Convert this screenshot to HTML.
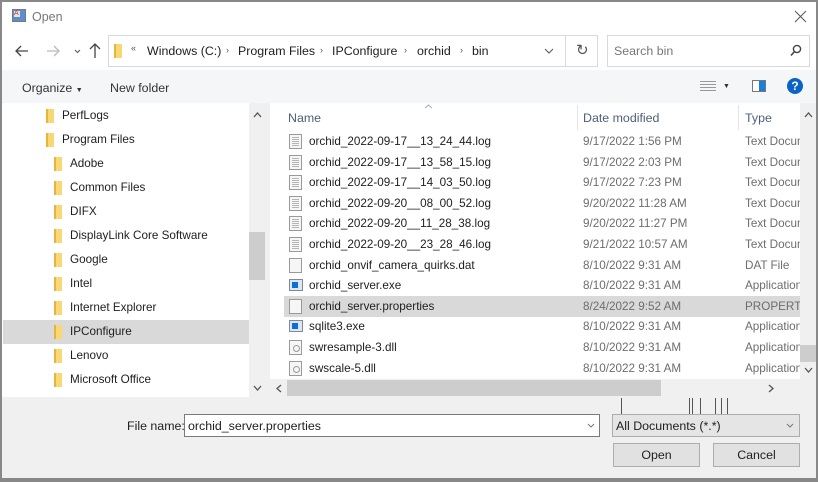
<!DOCTYPE html>
<html><head><style>
*{box-sizing:border-box;margin:0;padding:0}
body{width:818px;height:482px;overflow:hidden;background:#888;font-family:"Liberation Sans",sans-serif;font-size:11.7px;color:#1e1e1e;position:relative}
.a{position:absolute}
.win{left:2px;top:2px;width:814px;height:476px;background:#fff}
.t{position:absolute;white-space:nowrap;font-size:11.7px}
.fold{position:absolute;width:8px;height:14px;background:#f8d775;border-left:2px solid #e6b53c}
.ico{position:absolute;width:13px;height:15px;border:1px solid #9a9a9a;background:#f6f6f6}
.log::after{content:"";position:absolute;left:2px;top:2px;width:7px;height:9px;background:repeating-linear-gradient(#b5b5b5 0 1px,transparent 1px 2px)}
.exe{position:absolute;width:14px;height:12px;border:1px solid #7a8aa0;background:#dfe6ee}
.exe::after{content:"";position:absolute;left:2px;top:2px;width:6px;height:6px;background:#0a6fd8}
.dll::after{content:"";position:absolute;left:3px;top:4px;width:5px;height:5px;border:1px solid #999;border-radius:50%}
.gray{color:#6d6d6d}
.sep{font-size:9px;color:#555}
</style></head><body>
<div class="a win"></div>
<!-- title -->
<div class="a" style="left:12px;top:9px;width:14px;height:13px;background:#5c8fc9;border:1px solid #778"></div>
<div class="a" style="left:14px;top:11px;width:6px;height:6px;background:#e3e3e3;font-size:7px;color:#c33;line-height:6px">A</div>
<div class="t" style="left:32px;top:10px;font-size:12.5px;color:#777">Open</div>
<svg class="a" style="left:794px;top:10px" width="13" height="13"><path d="M1 1L12 12M12 1L1 12" stroke="#555" stroke-width="1"/></svg>
<!-- nav -->
<svg class="a" style="left:15px;top:45px" width="14" height="12"><path d="M1 6H13M6 1L1 6L6 11" stroke="#444" stroke-width="1.3" fill="none"/></svg>
<svg class="a" style="left:46px;top:45px" width="14" height="12"><path d="M1 6H13M8 1L13 6L8 11" stroke="#bbb" stroke-width="1.3" fill="none"/></svg>
<svg class="a" style="left:74px;top:49px" width="7" height="5"><path d="M1 1L3.5 3.5L6 1" stroke="#555" fill="none"/></svg>
<svg class="a" style="left:89px;top:43px" width="12" height="16"><path d="M6 15V1M1 6L6 1L11 6" stroke="#444" stroke-width="1.3" fill="none"/></svg>
<div class="a" style="left:108px;top:35px;width:490px;height:32px;border:1px solid #d9d9d9"></div>
<div class="a" style="left:565px;top:35px;width:1px;height:32px;background:#d9d9d9"></div>
<div class="fold" style="left:114px;top:44px"></div>
<div class="t" style="left:131px;top:43px;font-size:9px;color:#555">«</div>
<div class="t" style="left:147px;top:44px;font-size:12.4px">Windows (C:)</div>
<div class="t sep" style="left:226px;top:45px">›</div>
<div class="t" style="left:238px;top:44px;font-size:12.4px">Program Files</div>
<div class="t sep" style="left:320px;top:45px">›</div>
<div class="t" style="left:332px;top:44px;font-size:12.4px">IPConfigure</div>
<div class="t sep" style="left:404px;top:45px">›</div>
<div class="t" style="left:417px;top:44px;font-size:12.4px">orchid</div>
<div class="t sep" style="left:460px;top:45px">›</div>
<div class="t" style="left:472px;top:44px;font-size:12.4px">bin</div>
<svg class="a" style="left:544px;top:48px" width="10" height="6"><path d="M1 1L5 5L9 1" stroke="#555" fill="none"/></svg>
<div class="t" style="left:576px;top:41px;font-size:15px;color:#555">↻</div>
<div class="a" style="left:607px;top:35px;width:203px;height:32px;border:1px solid #d9d9d9"></div>
<div class="t gray" style="left:614px;top:44px;font-size:12.4px;color:#777">Search bin</div>
<svg class="a" style="left:790px;top:44px" width="12" height="13"><circle cx="7" cy="5" r="3.6" stroke="#444" stroke-width="1.4" fill="none"/><path d="M4.5 7.5L1 11.5" stroke="#444" stroke-width="1.6"/></svg>
<!-- toolbar -->
<div class="a" style="left:2px;top:70px;width:814px;height:33px;background:#f5f6f7"></div>
<div class="t" style="left:22px;top:81px;font-size:12.4px;color:#333">Organize <span style="font-size:7px">▼</span></div>
<div class="t" style="left:110px;top:81px;font-size:12.4px;color:#333">New folder</div>
<div class="a" style="left:700px;top:81px;width:16px;height:12px;background:repeating-linear-gradient(#999 0 1px,transparent 1px 3px)"></div>
<div class="t" style="left:723px;top:83px;font-size:7px;color:#333">▼</div>
<div class="a" style="left:752px;top:80px;width:14px;height:12px;border:1px solid #777;background:linear-gradient(90deg,#fff 50%,#1a7fdc 50%)"></div>
<div class="a" style="left:787px;top:78px;width:16px;height:16px;border-radius:50%;background:#0b63c5;color:#fff;font-size:12px;font-weight:bold;text-align:center;line-height:16px">?</div>
<!-- left pane -->
<div class="a" style="left:249px;top:103px;width:16px;height:294px;background:#f0f0f0"></div>
<div class="a" style="left:249px;top:232px;width:16px;height:48px;background:#cdcdcd"></div>
<svg class="a" style="left:253px;top:112px" width="9" height="6"><path d="M1 5L4.5 1L8 5" stroke="#555" stroke-width="1.3" fill="none"/></svg>
<svg class="a" style="left:253px;top:385px" width="9" height="6"><path d="M1 1L4.5 5L8 1" stroke="#555" stroke-width="1.3" fill="none"/></svg>
<div class="a" style="left:3px;top:320px;width:246px;height:24px;background:#d9d9d9"></div>
<div class="a" style="left:265px;top:103px;width:5px;height:294px;background:#f0f0f0"></div>
<div id="tree"></div>
<!-- right header -->
<svg class="a" style="left:424px;top:104px" width="9" height="5"><path d="M1 4L4.5 1L8 4" stroke="#aaa" fill="none"/></svg>
<div class="t" style="left:288px;top:111px;font-size:12.4px;color:#4c607a">Name</div>
<div class="a" style="left:577px;top:105px;width:1px;height:25px;background:#e5e5e5"></div>
<div class="t" style="left:583px;top:111px;font-size:12.4px;color:#4c607a">Date modified</div>
<div class="a" style="left:738px;top:105px;width:1px;height:25px;background:#e5e5e5"></div>
<div class="t" style="left:745px;top:111px;font-size:12.4px;color:#4c607a">Type</div>
<div class="a" style="left:800px;top:103px;width:16px;height:276px;background:#f0f0f0"></div>
<div class="a" style="left:800px;top:345px;width:16px;height:17px;background:#cdcdcd"></div>
<svg class="a" style="left:804px;top:112px" width="9" height="6"><path d="M1 5L4.5 1L8 5" stroke="#555" stroke-width="1.3" fill="none"/></svg>
<svg class="a" style="left:804px;top:367px" width="9" height="6"><path d="M1 1L4.5 5L8 1" stroke="#555" stroke-width="1.3" fill="none"/></svg>
<div class="a" style="left:284px;top:296px;width:516px;height:21px;background:#d9d9d9"></div>
<div id="files"></div>
<!-- hscroll -->
<div class="a" style="left:270px;top:379px;width:530px;height:18px;background:#f0f0f0"></div>
<div class="a" style="left:287px;top:380px;width:374px;height:16px;background:#cdcdcd"></div>
<svg class="a" style="left:276px;top:384px" width="6" height="9"><path d="M5 1L1 4.5L5 8" stroke="#555" stroke-width="1.3" fill="none"/></svg>
<svg class="a" style="left:768px;top:384px" width="6" height="9"><path d="M1 1L5 4.5L1 8" stroke="#555" stroke-width="1.3" fill="none"/></svg>
<div class="a" style="left:800px;top:379px;width:16px;height:18px;background:#f0f0f0"></div>
<!-- bottom -->
<div class="a" style="left:2px;top:397px;width:814px;height:81px;background:#f0f0f0"></div>
<div class="a" style="left:621px;top:398px;width:1px;height:17px;background:#555"></div>
<div class="a" style="left:689px;top:398px;width:1px;height:17px;background:#555"></div>
<div class="a" style="left:692px;top:398px;width:1px;height:17px;background:#555"></div>
<div class="a" style="left:700px;top:398px;width:1px;height:17px;background:#555"></div>
<div class="a" style="left:715px;top:398px;width:1px;height:17px;background:#555"></div>
<div class="a" style="left:721px;top:398px;width:1px;height:17px;background:#555"></div>
<div class="a" style="left:727px;top:398px;width:1px;height:17px;background:#555"></div>
<div class="t" style="left:127px;top:419px;font-size:12.4px">File name:</div>
<div class="a" style="left:184px;top:414px;width:416px;height:23px;background:#fff;border:1px solid #7a7a7a"></div>
<div class="t" style="left:188px;top:419px;font-size:12.4px">orchid_server.properties</div>
<svg class="a" style="left:587px;top:423px" width="8" height="5"><path d="M1 1L4 4L7 1" stroke="#777" fill="none"/></svg>
<div class="a" style="left:612px;top:414px;width:188px;height:23px;background:#e5e5e5;border:1px solid #adadad"></div>
<div class="t" style="left:616px;top:419px;font-size:12.4px">All Documents (*.*)</div>
<svg class="a" style="left:786px;top:423px" width="8" height="5"><path d="M1 1L4 4L7 1" stroke="#777" fill="none"/></svg>
<div class="a" style="left:613px;top:443px;width:87px;height:24px;background:#e1e1e1;border:1px solid #adadad;text-align:center;font-size:12.4px;line-height:22px">Open</div>
<div class="a" style="left:713px;top:443px;width:87px;height:24px;background:#e1e1e1;border:1px solid #adadad;text-align:center;font-size:12.4px;line-height:22px">Cancel</div>
<script>
var tree=[["PerfLogs",46],["Program Files",46],["Adobe",54],["Common Files",54],["DIFX",54],["DisplayLink Core Software",54],["Google",54],["Intel",54],["Internet Explorer",54],["IPConfigure",54],["Lenovo",54],["Microsoft Office",54]];
var h="";tree.forEach(function(r,i){var y=109+i*24;h+='<div class="fold" style="left:'+r[1]+'px;top:'+y+'px"></div><div class="t" style="left:'+(r[1]+16)+'px;top:'+y+'px">'+r[0]+'</div>';});
document.getElementById("tree").innerHTML=h;
var f=[["orchid_2022-09-17__13_24_44.log","9/17/2022 1:56 PM","Text Docum","log"],["orchid_2022-09-17__13_58_15.log","9/17/2022 2:03 PM","Text Docum","log"],["orchid_2022-09-17__14_03_50.log","9/17/2022 7:23 PM","Text Docum","log"],["orchid_2022-09-20__08_00_52.log","9/20/2022 11:28 AM","Text Docum","log"],["orchid_2022-09-20__11_28_38.log","9/20/2022 11:27 PM","Text Docum","log"],["orchid_2022-09-20__23_28_46.log","9/21/2022 10:57 AM","Text Docum","log"],["orchid_onvif_camera_quirks.dat","8/10/2022 9:31 AM","DAT File","dat"],["orchid_server.exe","8/10/2022 9:31 AM","Application","exe"],["orchid_server.properties","8/24/2022 9:52 AM","PROPERTIES","dat"],["sqlite3.exe","8/10/2022 9:31 AM","Application","exe"],["swresample-3.dll","8/10/2022 9:31 AM","Application","dll"],["swscale-5.dll","8/10/2022 9:31 AM","Application","dll"]];
h="";f.forEach(function(r,i){var y=134+i*20.6;
if(r[3]=="exe")h+='<div class="exe" style="left:289px;top:'+(y+1)+'px"></div>';
else h+='<div class="ico '+r[3]+'" style="left:289px;top:'+y+'px"></div>';
h+='<div class="t" style="left:309px;top:'+(y+1)+'px">'+r[0]+'</div><div class="t gray" style="left:583px;top:'+(y+1)+'px">'+r[1]+'</div><div class="t gray" style="left:745px;top:'+(y+1)+'px;width:55px;overflow:hidden">'+r[2]+'</div>';});
document.getElementById("files").innerHTML=h;
</script>
</body></html>
